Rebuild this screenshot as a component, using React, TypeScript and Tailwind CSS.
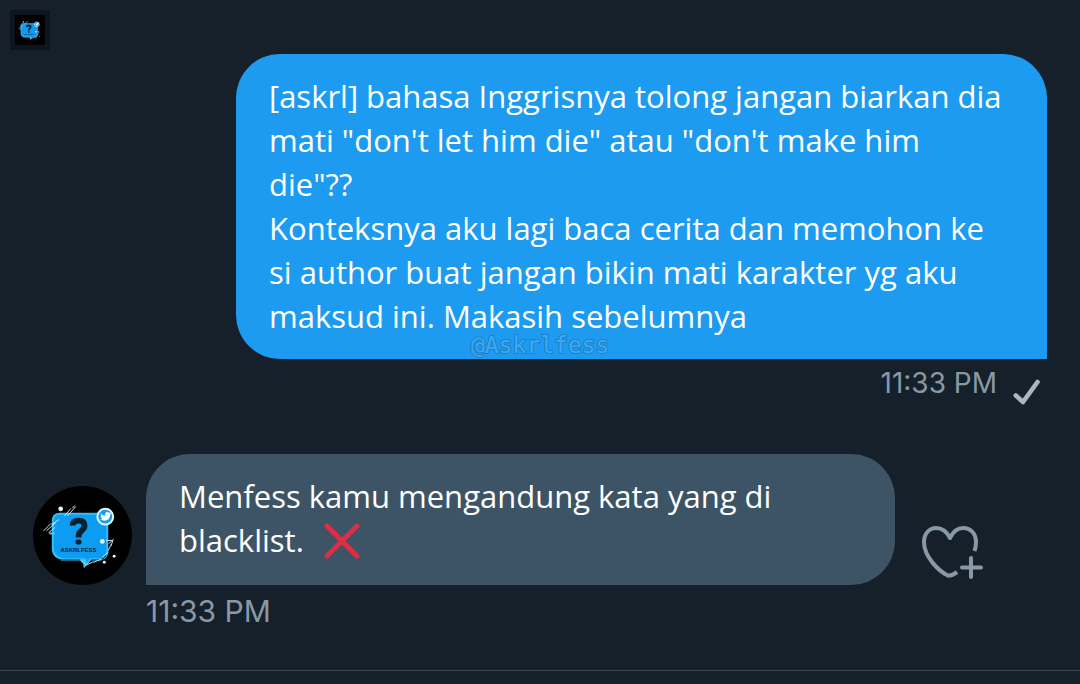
function BotArtwork({ className }: { className: string }) {
  return (
    <svg viewBox="0 0 100 100" className={className} aria-hidden="true">
      <rect width="100" height="100" fill="#000" />
      <path
        d="M27 28H66Q75 28 75 36V66Q75 74 67 74H58L52 81L51 74H32Q20 73 20 63V35Q20 28 27 28Z"
        fill="#0c9df2"
        stroke="#35bdf5"
        strokeWidth="2"
      />
      <path d="M28 75H52M59 75H68L74 70" fill="none" stroke="#285d78" strokeWidth="2" />
      <path
        d="M40 40Q40 35 46 35Q52 35 52 40Q52 43 48 46Q46 48 46 52"
        fill="none"
        stroke="#06222f"
        strokeWidth="6"
      />
      <rect x="43" y="54" width="6" height="5" rx="2" fill="#06222f" />
      <text
        x="46"
        y="67"
        textAnchor="middle"
        fill="#06222f"
        className="font-['Liberation_Sans'] text-[6px] font-bold"
      >
        ASKRLFESS
      </text>
      <g fill="none" stroke="#d5e5ec" strokeWidth="1" strokeLinecap="round">
        <path d="M32 30L38 23M35 30L43 21M40 22L42 20M11 45L18 38M14 45L23 37M16 47L22 42M19 39L26 34" />
        <path d="M53 80L60 77M61 77L69 74M70 72L76 67M76 65L79 59M74 55H80L77 58M81 54L79 60" />
      </g>
      <path d="M16 47H22V49H17ZM47 74H54L53 80L49 77Z" fill="#54c8ef" />
      <g fill="#e8f4f8">
        <circle cx="28" cy="23" r="2.4" />
        <circle cx="72" cy="77" r="1.5" />
        <circle cx="82" cy="71" r="1.5" />
        <circle cx="70" cy="56" r="2.4" />
      </g>
      <circle cx="73" cy="31" r="8" fill="#179df0" stroke="#e5f7fc" strokeWidth="2" />
      <path
        d="M68 27Q70 30 73 30Q72 27 75 26L77 27L79 27L78 29Q78 35 72 35L68 34L70 33L68 31L69 30Z"
        fill="#f0fbff"
      />
    </svg>
  );
}

function SentMark() {
  return (
    <svg viewBox="0 0 28 28" className="mt-3 size-7" role="img" aria-label="Sent">
      <path
        d="M2.8 16.5L10 23L24.5 3"
        fill="none"
        stroke="#abb7bf"
        strokeWidth="4.6"
        strokeLinecap="round"
        strokeLinejoin="round"
      />
    </svg>
  );
}

function CrossMark() {
  return (
    <svg viewBox="0 0 36 36" className="ml-3 inline-block size-9 align-[-7px]" role="img" aria-label="Cross mark">
      <path d="M3 3L33 33M33 3L3 33" fill="none" stroke="#dd2e44" strokeWidth="5" strokeLinecap="round" />
    </svg>
  );
}

function HeartPlus() {
  return (
    <svg viewBox="0 0 64 56" className="h-14 w-16" aria-hidden="true">
      <g fill="none" stroke="#8899a6" strokeWidth="4" strokeLinecap="round" strokeLinejoin="round">
        <path
          d="M53.5 27Q55 23 55 18C55 9 49 4 42 4C36 4 32 8 29 14C26 8 21 4 15 4C8 4 3 10 3 18C3 33 18 47 26 51Q29 53 36 48"
          strokeLinecap="butt"
        />
        <path d="M50 34V53M41 43.500H60" />
      </g>
    </svg>
  );
}

export default function App() {
  return (
    <main className="min-h-screen bg-[#16202a] font-['Open_Sans','Liberation_Sans',sans-serif] text-white">
      <header className="h-[54px] px-2.5 pt-2.5">
        <div className="size-10 bg-[#0d151f] p-[5px]">
          <BotArtwork className="size-full" />
        </div>
      </header>

      <section className="flex flex-col items-end px-[33px]">
        <div className="relative w-4/5 max-w-[811px] rounded-[44px] rounded-br-none bg-[#1d9bf0] pr-11 pl-[33px] pt-5 pb-[21px] text-[31px] leading-[44px]">
          <p>
            [askrl] bahasa Inggrisnya tolong jangan biarkan dia mati "don't let him die" atau "don't
            make him die"??
          </p>
          <p>
            Konteksnya aku lagi baca cerita dan memohon ke si author buat jangan bikin mati karakter
            yg aku maksud ini. Makasih sebelumnya
          </p>
          <span className="absolute bottom-0.5 left-[235px] font-['DejaVu_Sans_Mono',monospace] text-[23px] leading-6 text-[#3aaaf5] [-webkit-text-stroke:2px_#2280c6] [paint-order:stroke_fill]">
            @Askrlfess
          </span>
        </div>
        <div className="flex h-[95px] gap-4 pt-2 pr-1.5">
          <time className="font-['Inter','Liberation_Sans',sans-serif] text-[28px] leading-8 text-[#8899a6]">11:33 PM</time>
          <SentMark />
        </div>
      </section>

      <section className="flex gap-3.5 px-[33px]">
        <div className="mt-8 size-[99px] shrink-0 overflow-hidden rounded-full">
          <BotArtwork className="size-full" />
        </div>
        <div className="w-[749px]">
          <div className="rounded-[44px] rounded-bl-none bg-[#3d5466] pr-11 pl-[33px] pt-5 pb-[23px] text-[31px] leading-[44px]">
            <p>
              Menfess kamu mengandung kata yang di blacklist. <CrossMark />
            </p>
          </div>
          <time className="mt-2.5 block font-['Inter','Liberation_Sans',sans-serif] text-[30px] leading-8 text-[#8899a6]">11:33 PM</time>
        </div>
        <button type="button" aria-label="Add reaction" className="mt-[70px] ml-3 h-14 shrink-0">
          <HeartPlus />
        </button>
      </section>

      <hr className="mt-[43px] border-t border-[#38444d]" />
    </main>
  );
}
